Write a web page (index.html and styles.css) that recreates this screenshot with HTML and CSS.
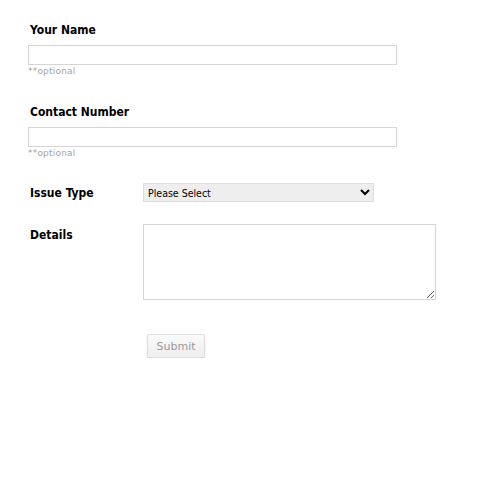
FILE: index.html
```html
<!doctype html>
<html lang="en">
	<head>
		<meta charset="UTF-8">
		<title>Contact</title>
		<link rel="stylesheet" href="styles.css">
	</head>
	<body>
		<form class="form">
			<div class="field">
				<label class="label" for="name">Your Name</label>
				<input type="text" id="name" class="text">
				<span class="hint">**optional</span>
			</div>
			<div class="field field-last">
				<label class="label" for="phone">Contact Number</label>
				<input type="text" id="phone" class="text">
				<span class="hint">**optional</span>
			</div>
			<div class="row row-select">
				<label class="label side" for="issue">Issue Type</label>
				<select id="issue" class="select">
					<option>Please Select</option>
				</select>
			</div>
			<div class="row">
				<label class="label side" for="details">Details</label>
				<textarea id="details" class="area"></textarea>
			</div>
			<div class="actions">
				<button type="button" class="btn">Submit</button>
			</div>
		</form>
	</body>
</html>
```

FILE: styles.css
```css
html,body,form,div,label,input,select,textarea,button {
	margin: 0;
	padding: 0;
	box-sizing: border-box;
}
body {
	background: #fff;
	font-family: "DejaVu Sans", Verdana, sans-serif;
	color: #000;
}
.form {
	padding: 22px 0 0 28px;
}
.label {
	display: block;
	font-family: "DejaVu Sans Condensed", "DejaVu Sans", Verdana, sans-serif;
	font-size: 12px;
	font-weight: bold;
	line-height: 16px;
	padding-left: 2px;
}
.field {
	margin-bottom: 27px;
}
.field-last {
	margin-bottom: 24px;
}
.field .label {
	margin-bottom: 7px;
}
.text {
	display: block;
	width: 369px;
	height: 20px;
	border: 1px solid #d4d4d4;
	background: #fff;
	outline: none;
}
.hint {
	display: block;
	font-size: 9px;
	line-height: 12px;
	color: #a4a4a4;
	letter-spacing: 0.2px;
}
.row {
	display: flex;
	align-items: flex-start;
	margin-bottom: 34px;
}
.row-select {
	margin-bottom: 22px;
	align-items: center;
}
.side {
	width: 115px;
	padding-top: 3px;
}
.row-select .side {
	padding-top: 0;
}
.select {
	width: 231px;
	height: 19px;
	font-family: "DejaVu Sans Condensed", "DejaVu Sans", Verdana, sans-serif;
	font-size: 10.5px;
	color: #000;
	background: #eee;
	border: 1px solid #ddd;
	padding-left: 0;
}
.area {
	width: 293px;
	height: 76px;
	border: 1px solid #d4d4d4;
	background: #fff;
}
.actions {
	padding-left: 119px;
}
.btn {
	width: 58px;
	height: 24px;
	font-family: "DejaVu Sans", Verdana, sans-serif;
	font-size: 11px;
	color: #999;
	background: linear-gradient(#fafafa, #eee);
	border: 1px solid #ddd;
	border-radius: 2px;
	box-shadow: 0 1px 1px #bbb;
}
```
